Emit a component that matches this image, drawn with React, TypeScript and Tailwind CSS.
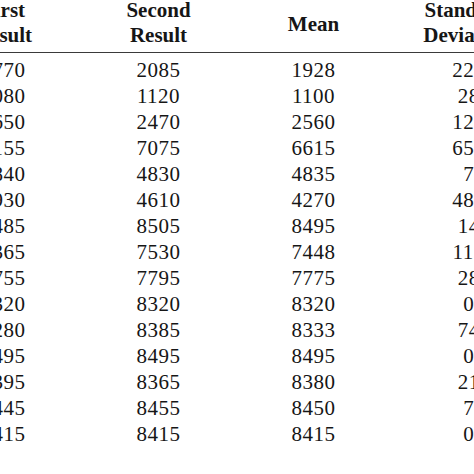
const rows = [
  [1770, 2085, 1928, "222.74"],
  [1080, 1120, 1100, "28.28"],
  [2650, 2470, 2560, "127.28"],
  [6155, 7075, 6615, "650.54"],
  [4840, 4830, 4835, "7.07"],
  [3930, 4610, 4270, "480.83"],
  [8485, 8505, 8495, "14.14"],
  [7365, 7530, 7448, "116.67"],
  [7755, 7795, 7775, "28.28"],
  [8320, 8320, 8320, "0.00"],
  [8280, 8385, 8333, "74.25"],
  [8495, 8495, 8495, "0.00"],
  [8395, 8365, 8380, "21.21"],
  [8445, 8455, 8450, "7.07"],
  [8415, 8415, 8415, "0.00"],
];

const cols = "grid grid-cols-[155px_155px_155px_183px]";

export default function App() {
  return (
    <div className="w-[474px] h-[474px] overflow-hidden bg-white text-[#161616] font-['Liberation_Serif',serif]">
      <div className="ml-[-74px] mt-[-2px] w-[648px]">
        {/* Header */}
        <div className={`${cols} pb-[4px] border-b-[1.5px] border-[#3a3a3a] text-[21px] leading-[25px] font-bold`}>
          <div className="text-center">
            <div>First</div>
            <div>Result</div>
          </div>
          <div className="text-center">
            <div>Second</div>
            <div>Result</div>
          </div>
          <div className="flex items-center justify-center pt-[3px]">Mean</div>
          <div className="text-center pr-[32px]">
            <div>Standard</div>
            <div>Deviation</div>
          </div>
        </div>

        {/* Body */}
        <div className="pt-[4px] text-[21px] leading-[26px] tracking-[0.5px]">
          {rows.map((r, i) => (
            <div key={i} className={cols}>
              {r.map((v, j) => (
                <div key={j} className="text-center">
                  {v}
                </div>
              ))}
            </div>
          ))}
        </div>
      </div>
    </div>
  );
}
